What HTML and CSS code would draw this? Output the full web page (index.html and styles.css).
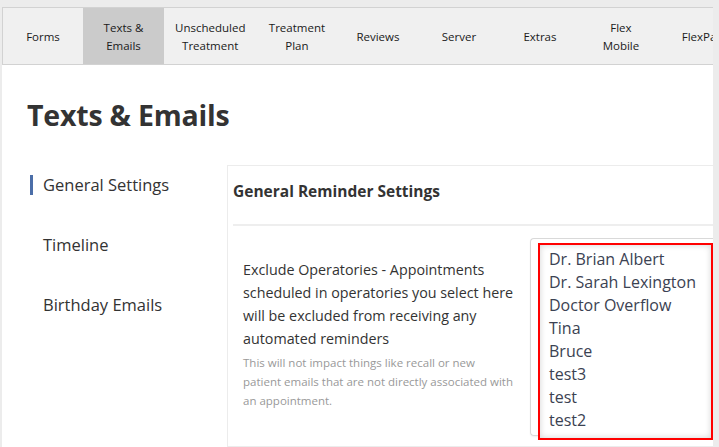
FILE: index.html
```html
<!DOCTYPE html>
<html>
<head>
<meta charset="utf-8">
<link rel="stylesheet" href="styles.css">
</head>
<body>
<div class="app">
  <nav class="tabs">
    <div class="tab">Forms</div>
    <div class="tab active">Texts &amp;<br>Emails</div>
    <div class="tab">Unscheduled<br>Treatment</div>
    <div class="tab">Treatment<br>Plan</div>
    <div class="tab">Reviews</div>
    <div class="tab">Server</div>
    <div class="tab">Extras</div>
    <div class="tab">Flex<br>Mobile</div>
    <div class="tab">FlexPay</div>
  </nav>
  <main class="main">
    <h1 class="title">Texts &amp; Emails</h1>
    <div class="layout">
      <aside class="side">
        <div class="side-item current">General Settings</div>
        <div class="side-item">Timeline</div>
        <div class="side-item">Birthday Emails</div>
      </aside>
      <section class="card">
        <h2 class="card-title">General Reminder Settings</h2>
        <div class="row">
          <div class="label">
            <p class="label-main">Exclude Operatories - Appointments scheduled in operatories you select here will be excluded from receiving any automated reminders</p>
            <p class="label-help">This will not impact things like recall or new patient emails that are not directly associated with an appointment.</p>
          </div>
          <div class="select">
            <div class="listbox">
              <div class="opt">Dr. Brian Albert</div>
              <div class="opt">Dr. Sarah Lexington</div>
              <div class="opt">Doctor Overflow</div>
              <div class="opt">Tina</div>
              <div class="opt">Bruce</div>
              <div class="opt">test3</div>
              <div class="opt">test</div>
              <div class="opt">test2</div>
            </div>
          </div>
        </div>
      </section>
    </div>
  </main>
</div>
</body>
</html>
```

FILE: styles.css
```css
html, body {
  margin: 0;
  padding: 0;
  height: 100%;
  overflow: hidden;
}
body {
  background: #ececec;
  font-family: "Open Sans", "Noto Sans", sans-serif;
  color: #333;
}
.app {
  margin: 7px 0 0 2px;
  width: 711px;
  height: 440px;
  background: #fff;
  overflow: hidden;
}
.tabs {
  display: flex;
  height: 56px;
  background: #f0f0f0;
  border: 1px solid #d2d2d2;
  border-right: none;
  overflow: hidden;
}
.tab {
  flex: none;
  min-width: 81px;
  box-sizing: border-box;
  padding: 2px 11px 0;
  display: flex;
  align-items: center;
  justify-content: center;
  text-align: center;
  font-size: 11.5px;
  line-height: 18px;
  color: #1a1a1a;
  white-space: nowrap;
}
.tab:first-child {
  min-width: 80px;
}
.tab.active {
  background: #cbcbcb;
}
.main {
  padding: 0 0 0 25px;
}
.title {
  margin: 30px 0 0;
  font-size: 28.5px;
  line-height: 40px;
  font-weight: 700;
  color: #333;
  letter-spacing: -0.2px;
}
.layout {
  display: flex;
  margin-top: 30px;
}
.side {
  width: 200px;
  flex: none;
  padding-top: 8px;
}
.side-item {
  font-size: 16.5px;
  line-height: 24px;
  height: 24px;
  margin-bottom: 36px;
  padding-left: 16px;
  color: #333;
  position: relative;
}
.side-item.current::before {
  content: "";
  position: absolute;
  left: 3px;
  top: 2px;
  width: 3px;
  height: 20px;
  background: #4b6ea8;
}
.card {
  flex: 1;
  border: 1px solid #ececec;
  border-right: none;
  padding: 0 0 0 5px;
  height: 280px;
}
.card-title {
  margin: 0;
  padding: 13px 0 0;
  box-sizing: border-box;
  font-size: 15.5px;
  line-height: 24px;
  font-weight: 700;
  color: #333;
  border-bottom: 2px solid #eeeeee;
  height: 60px;
}
.row {
  display: flex;
  padding: 12px 0 0 10px;
}
.label {
  width: 272px;
  margin-right: 15px;
  flex: none;
  padding-top: 20px;
}
.label-main {
  margin: 0;
  font-size: 14.3px;
  line-height: 23px;
  color: #333;
}
.label-help {
  margin: 3px 0 0;
  font-size: 11.5px;
  line-height: 19px;
  color: #999;
}
.select {
  position: relative;
  width: 200px;
  height: 196px;
  border: 1px solid #d9d9d9;
  border-right: none;
  border-radius: 4px 0 0 4px;
  box-shadow: 0 1px 2px rgba(0,0,0,0.06);
}
.listbox {
  position: absolute;
  left: 7px;
  top: 4px;
  width: 175px;
  height: 197px;
  border: 2px solid #ff0000;
  box-shadow: inset 0 0 6px rgba(0,0,0,0.18);
  padding: 3px 0 0 9px;
  box-sizing: border-box;
  background: #fff;
}
.opt {
  font-size: 16px;
  line-height: 23px;
  color: #3b4252;
  white-space: nowrap;
}
```
